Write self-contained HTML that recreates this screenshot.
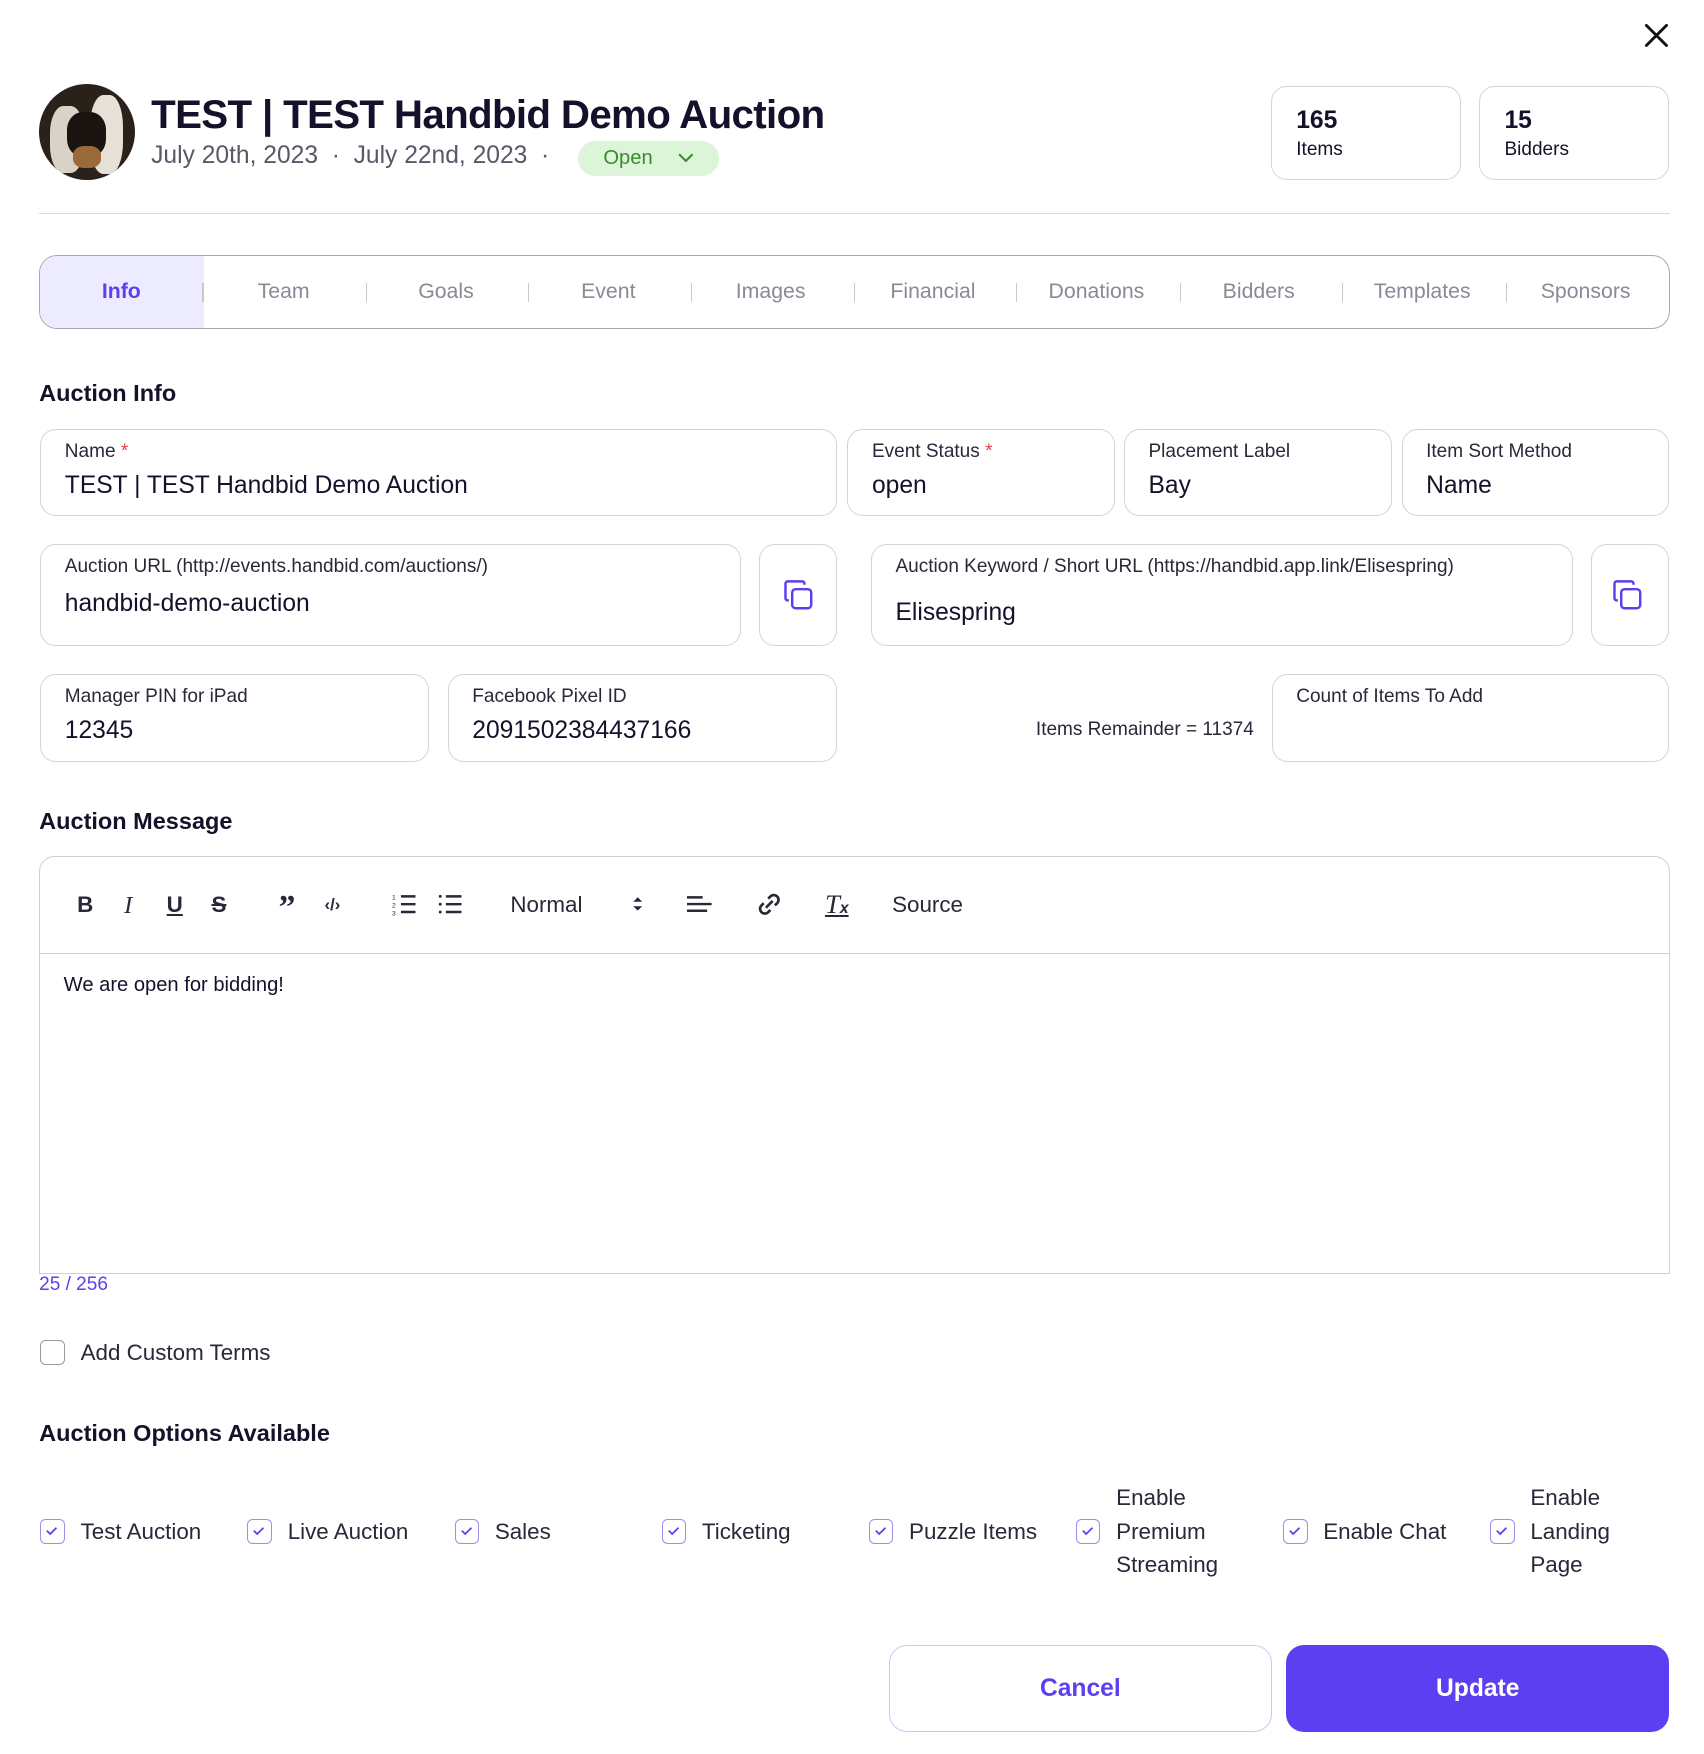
<!DOCTYPE html>
<html><head><meta charset="utf-8"><style>
*{box-sizing:border-box;margin:0;padding:0}
html,body{background:#fff}
body{zoom:1.1195;width:1522px;height:1567px;position:relative;font-family:"Liberation Sans",sans-serif;color:#14122a;overflow:hidden}
.a{position:absolute}
.box{position:absolute;border:1px solid #d4d3dc;border-radius:14px;background:#fff}
.lbl{position:absolute;left:21px;top:10px;font-size:17px;color:#2a2838}
.val{position:absolute;left:21px;top:38px;font-size:22px;color:#14122a}
.req{color:#e0424e}
h2{position:absolute;left:35px;font-size:21px;font-weight:bold}
.tab{position:absolute;top:0;height:65px;line-height:64px;width:145px;text-align:center;font-size:19px;color:#8a8996}
.sep{position:absolute;top:24px;width:1px;height:17px;background:#c8c7d0}
.cb{position:absolute;width:22px;height:22px;border:1.5px solid #9a8ff0;border-radius:5px}
.opt{position:absolute;font-size:20px;line-height:30px;color:#2a2838}
.tb{position:absolute;top:31px;font-size:20px;color:#2a2838}
</style></head><body>
<svg class="a" style="left:1468px;top:20px" width="24" height="24" viewBox="0 0 24 24"><path d="M3 3L21 21M21 3L3 21" stroke="#111" stroke-width="2.6" stroke-linecap="round"/></svg>
<div class="a" style="left:35px;top:75px;width:86px;height:86px;border-radius:50%;overflow:hidden;background:#2a211a">
<div class="a" style="left:10px;top:20px;width:30px;height:60px;background:#d9d2c6;border-radius:40%"></div>
<div class="a" style="left:45px;top:10px;width:30px;height:70px;background:#e6e0d6;border-radius:40%"></div>
<div class="a" style="left:25px;top:25px;width:35px;height:40px;background:#1a1410;border-radius:40%"></div>
<div class="a" style="left:30px;top:55px;width:25px;height:20px;background:#9a6a3a;border-radius:40%"></div>
</div>
<div class="a" style="left:135px;top:82px;font-size:36px;font-weight:bold;letter-spacing:-0.6px">TEST | TEST Handbid Demo Auction</div>
<div class="a" style="left:135px;top:127px;font-size:22px;color:#5a5868">July 20th, 2023 &nbsp;·&nbsp; July 22nd, 2023 &nbsp;·</div>
<div class="a" style="left:516px;top:126px;width:126px;height:31px;border-radius:16px;background:#dcf5d8;color:#3b8a30;font-size:18px;line-height:31px;padding-left:23px">Open
<svg class="a" style="left:90px;top:10px" width="14" height="10" viewBox="0 0 14 10"><path d="M1 2l6 6 6-6" stroke="#3b8a30" stroke-width="1.8" fill="none"/></svg></div>
<div class="box" style="left:1135px;top:77px;width:170px;height:84px"><div class="a" style="left:22px;top:18px;font-size:22px;font-weight:bold">165</div><div class="a" style="left:22px;top:46px;font-size:17px">Items</div></div>
<div class="box" style="left:1321px;top:77px;width:170px;height:84px"><div class="a" style="left:22px;top:18px;font-size:22px;font-weight:bold">15</div><div class="a" style="left:22px;top:46px;font-size:17px">Bidders</div></div>
<div class="a" style="left:35px;top:190px;width:1457px;height:1px;background:#d8d8de"></div>

<div class="a" style="left:35px;top:228px;width:1457px;height:66px;border:1px solid #a9a8b4;border-radius:16px;overflow:hidden">
<div class="a" style="left:0;top:0;width:146px;height:65px;background:#ecebff"></div>
<div class="tab" style="left:0;color:#5b3ff0;font-weight:bold">Info</div>
<div class="tab" style="left:145px">Team</div><div class="tab" style="left:290px">Goals</div><div class="tab" style="left:435px">Event</div><div class="tab" style="left:580px">Images</div><div class="tab" style="left:725px">Financial</div><div class="tab" style="left:871px">Donations</div><div class="tab" style="left:1016px">Bidders</div><div class="tab" style="left:1162px">Templates</div><div class="tab" style="left:1308px">Sponsors</div>
<div class="sep" style="left:145px"></div><div class="sep" style="left:291px"></div><div class="sep" style="left:436px"></div><div class="sep" style="left:581px"></div><div class="sep" style="left:727px"></div><div class="sep" style="left:872px"></div><div class="sep" style="left:1018px"></div><div class="sep" style="left:1163px"></div><div class="sep" style="left:1309px"></div>
</div>

<h2 style="top:339px">Auction Info</h2>
<div class="box" style="left:36px;top:383px;width:712px;height:78px"><div class="lbl">Name <span class="req">*</span></div><div class="val">TEST | TEST Handbid Demo Auction</div></div>
<div class="box" style="left:757px;top:383px;width:239px;height:78px"><div class="lbl">Event Status <span class="req">*</span></div><div class="val">open</div></div>
<div class="box" style="left:1004px;top:383px;width:239px;height:78px"><div class="lbl">Placement Label</div><div class="val">Bay</div></div>
<div class="box" style="left:1252px;top:383px;width:239px;height:78px"><div class="lbl">Item Sort Method</div><div class="val">Name</div></div>

<div class="box" style="left:36px;top:486px;width:626px;height:91px"><div class="lbl">Auction URL (http://events.handbid.com/auctions/)</div><div class="val" style="top:40px">handbid-demo-auction</div></div>
<div class="box" style="left:678px;top:486px;width:70px;height:91px"><svg class="a" style="left:19px;top:29px" width="32" height="32" viewBox="0 0 32 32" fill="none" stroke="#5b3ff0" stroke-width="2.2"><rect x="10" y="10" width="17" height="17" rx="3"/><path d="M21 6V5a2 2 0 0 0-2-2H6a2 2 0 0 0-2 2v13a2 2 0 0 0 2 2h1"/></svg></div>
<div class="box" style="left:778px;top:486px;width:627px;height:91px"><div class="lbl">Auction Keyword / Short URL (https://handbid.app.link/Elisespring)</div><div class="val" style="top:48px">Elisespring</div></div>
<div class="box" style="left:1421px;top:486px;width:70px;height:91px"><svg class="a" style="left:16px;top:29px" width="32" height="32" viewBox="0 0 32 32" fill="none" stroke="#5b3ff0" stroke-width="2.2"><rect x="10" y="10" width="17" height="17" rx="3"/><path d="M21 6V5a2 2 0 0 0-2-2H6a2 2 0 0 0-2 2v13a2 2 0 0 0 2 2h1"/></svg></div>

<div class="box" style="left:36px;top:602px;width:347px;height:79px"><div class="lbl">Manager PIN for iPad</div><div class="val">12345</div></div>
<div class="box" style="left:400px;top:602px;width:348px;height:79px"><div class="lbl">Facebook Pixel ID</div><div class="val">2091502384437166</div></div>
<div class="a" style="left:880px;width:240px;text-align:right;top:642px;font-size:17px;color:#2a2838">Items Remainder = 11374</div>
<div class="box" style="left:1136px;top:602px;width:355px;height:79px"><div class="lbl">Count of Items To Add</div></div>

<h2 style="top:722px">Auction Message</h2>
<div class="a" style="left:35px;top:765px;width:1457px;height:373px;border:1px solid #cfcfd6;border-radius:14px 14px 0 0">
<div class="a" style="left:0;top:85px;width:100%;height:1px;background:#cfcfd6"></div>
<div class="tb" style="left:33px;font-weight:bold">B</div>
<div class="tb" style="left:75px;font-style:italic;font-family:'Liberation Serif',serif;font-size:22px">I</div>
<div class="tb" style="left:113px;text-decoration:underline;font-weight:bold">U</div>
<div class="tb" style="left:153px;text-decoration:line-through;font-weight:bold">S</div>
<div class="tb" style="left:213px;font-weight:bold;font-size:30px;top:28px;font-family:'Liberation Serif',serif">”</div>
<div class="tb" style="left:254px;font-size:15px;top:34px;font-weight:bold">‹/›</div>
<svg class="a" style="left:314px;top:32px" width="22" height="20" viewBox="0 0 22 20"><path d="M8 3h13M8 10h13M8 17h13" stroke="#2a2838" stroke-width="2.2"/><text x="0" y="6" font-size="6" fill="#2a2838">1</text><text x="0" y="13" font-size="6" fill="#2a2838">2</text><text x="0" y="20" font-size="6" fill="#2a2838">3</text></svg>
<svg class="a" style="left:355px;top:32px" width="22" height="20" viewBox="0 0 22 20"><path d="M7 3h14M7 10h14M7 17h14" stroke="#2a2838" stroke-width="2.2"/><circle cx="2" cy="3" r="1.3" fill="#2a2838"/><circle cx="2" cy="10" r="1.3" fill="#2a2838"/><circle cx="2" cy="17" r="1.3" fill="#2a2838"/></svg>
<div class="tb" style="left:420px">Normal</div>
<svg class="a" style="left:528px;top:34px" width="12" height="16" viewBox="0 0 12 16"><path d="M2 6l4-4 4 4zM2 10l4 4 4-4z" fill="#2a2838"/></svg>
<svg class="a" style="left:578px;top:33px" width="22" height="18" viewBox="0 0 22 18"><path d="M0 3h14M0 9h22M0 15h18" stroke="#2a2838" stroke-width="2.2"/></svg>
<svg class="a" style="left:640px;top:31px" width="22" height="22" viewBox="0 0 22 22" fill="none" stroke="#2a2838" stroke-width="2.4"><path d="M8 14l6-6"/><path d="M10 6l2-2a4 4 0 0 1 6 6l-2 2"/><path d="M12 16l-2 2a4 4 0 0 1-6-6l2-2"/></svg>
<div class="tb" style="left:701px;font-style:italic;font-family:'Liberation Serif',serif;font-size:24px;top:28px;text-decoration:underline">T<span style="font-size:14px;font-family:'Liberation Sans';font-weight:bold;text-decoration:none">x</span></div>
<div class="tb" style="left:761px">Source</div>
<div class="a" style="left:21px;top:104px;font-size:18px">We are open for bidding!</div>
</div>
<div class="a" style="left:35px;top:1138px;font-size:17px;color:#5b3ff0">25 / 256</div>

<div class="cb" style="left:36px;top:1197px;border-color:#9a99a4"></div>
<div class="opt" style="left:72px;top:1193px">Add Custom Terms</div>

<h2 style="top:1268px">Auction Options Available</h2>
<svg width="0" height="0" style="position:absolute"><defs><symbol id="ck" viewBox="0 0 22 22"><path d="M6 11l3.5 3.5L16 8" stroke="#5b3ff0" stroke-width="1.8" fill="none"/></symbol></defs></svg>
<div class="cb" style="left:36px;top:1357px"><svg width="19" height="19"><use href="#ck"/></svg></div><div class="opt" style="left:72px;top:1353px">Test Auction</div>
<div class="cb" style="left:221px;top:1357px"><svg width="19" height="19"><use href="#ck"/></svg></div><div class="opt" style="left:257px;top:1353px">Live Auction</div>
<div class="cb" style="left:406px;top:1357px"><svg width="19" height="19"><use href="#ck"/></svg></div><div class="opt" style="left:442px;top:1353px">Sales</div>
<div class="cb" style="left:591px;top:1357px"><svg width="19" height="19"><use href="#ck"/></svg></div><div class="opt" style="left:627px;top:1353px">Ticketing</div>
<div class="cb" style="left:776px;top:1357px"><svg width="19" height="19"><use href="#ck"/></svg></div><div class="opt" style="left:812px;top:1353px">Puzzle Items</div>
<div class="cb" style="left:961px;top:1357px"><svg width="19" height="19"><use href="#ck"/></svg></div><div class="opt" style="left:997px;top:1323px">Enable<br>Premium<br>Streaming</div>
<div class="cb" style="left:1146px;top:1357px"><svg width="19" height="19"><use href="#ck"/></svg></div><div class="opt" style="left:1182px;top:1353px">Enable Chat</div>
<div class="cb" style="left:1331px;top:1357px"><svg width="19" height="19"><use href="#ck"/></svg></div><div class="opt" style="left:1367px;top:1323px">Enable<br>Landing<br>Page</div>

<div class="a" style="left:794px;top:1469px;width:342px;height:78px;border:1px solid #cdc6f7;border-radius:16px;text-align:center;line-height:76px;font-size:22px;font-weight:bold;color:#5b3ff0">Cancel</div>
<div class="a" style="left:1149px;top:1469px;width:342px;height:78px;background:#5b3ff0;border-radius:16px;text-align:center;line-height:78px;font-size:22px;font-weight:bold;color:#fff">Update</div>
</body></html>
